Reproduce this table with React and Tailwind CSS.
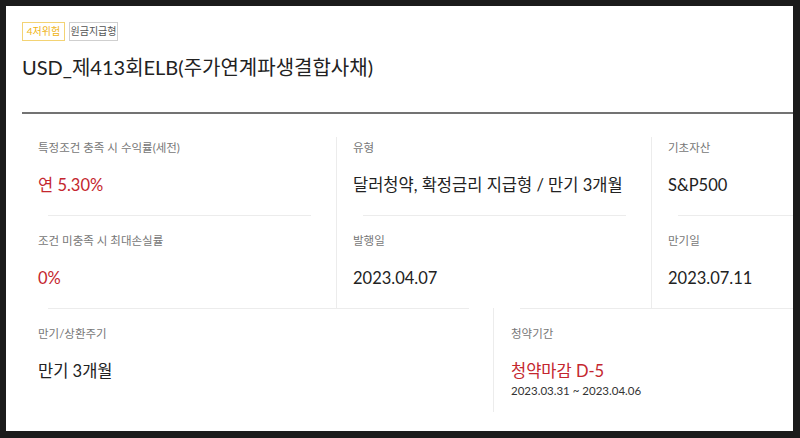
import React from "react";

function Item({ label, value, red, first, line = true }) {
  return (
    <div className={`pl-[16px] ${first ? "pt-[3px]" : "pt-[17px]"}`}>
      <div className="text-[11.5px] leading-[16px] text-[#777]">{label}</div>
      <div className={`mt-[17px] text-[16.5px] leading-[24px] ${red ? "text-[#c4262e]" : "text-[#222]"}`}>{value}</div>
      {line ? <div className="mt-[18px] ml-[10px] mr-[25px] h-px bg-[#ececec]" /> : <div className="h-[18px]" />}
    </div>
  );
}

function Column({ items }) {
  return (
    <div className="border-r border-[#ececec]">
      <Item {...items[0]} first />
      <Item {...items[1]} line={false} />
    </div>
  );
}

export default function App() {
  return (
    <div className="w-[800px] h-[438px] bg-[#1b1b1b] pt-[6px] pl-[6px] font-[Lato,'Noto_Sans_CJK_KR',sans-serif]">
      <div className="w-[787px] h-[425px] bg-white overflow-hidden pl-[16px] pt-[16px]">
        <div className="flex gap-[4px]">
          <span className="h-[19px] w-[43px] flex items-center justify-center border border-[#f3d374] text-[10px] text-[#efb313]">4저위험</span>
          <span className="h-[19px] w-[49px] flex items-center justify-center border border-[#cfcfcf] text-[10px] text-[#555]">원금지급형</span>
        </div>
        <div className="mt-[12px] text-[20px] leading-[28px] text-[#222] whitespace-nowrap">USD_제413회ELB(주가연계파생결합사채)</div>
        <div className="mt-[31px] h-[2px] w-[1000px] bg-[#737373]" />
        <div className="mt-[23px] grid grid-cols-[315px_315px_315px] w-[945px]">
          <Column items={[
            { label: "특정조건 충족 시 수익률(세전)", value: "연 5.30%", red: true },
            { label: "조건 미충족 시 최대손실률", value: "0%", red: true },
          ]} />
          <Column items={[
            { label: "유형", value: "달러청약, 확정금리 지급형 / 만기 3개월" },
            { label: "발행일", value: "2023.04.07" },
          ]} />
          <Column items={[
            { label: "기초자산", value: "S&P500" },
            { label: "만기일", value: "2023.07.11" },
          ]} />
        </div>
        <div className="grid grid-cols-[472px_472px] w-[944px]">
          <div className="border-r border-[#ececec] pl-[16px] pb-[29px]">
            <div className="ml-[10px] mr-[24px] h-px bg-[#ececec]" />
            <div className="pt-[17px] text-[11.5px] leading-[16px] text-[#777]">만기/상환주기</div>
            <div className="mt-[17px] text-[16.5px] leading-[24px] text-[#222]">만기 3개월</div>
          </div>
          <div className="pl-[17px] pb-[13px]">
            <div className="ml-[9px] mr-[24px] h-px bg-[#ececec]" />
            <div className="pt-[17px] text-[11.5px] leading-[16px] text-[#777]">청약기간</div>
            <div className="mt-[17px] text-[16.5px] leading-[24px] text-[#c4262e]">청약마감 D-5</div>
            <div className="text-[11.5px] leading-[16px] text-[#333]">2023.03.31 ~ 2023.04.06</div>
          </div>
        </div>
      </div>
    </div>
  );
}
